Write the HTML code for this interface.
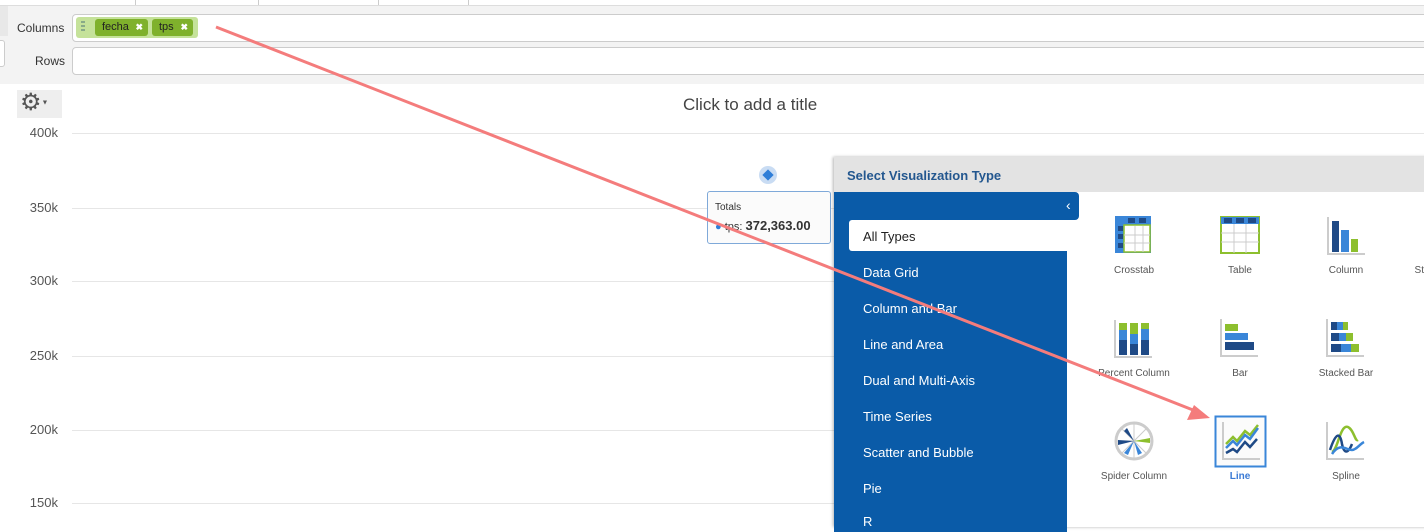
<!DOCTYPE html><html><head><style>
body{margin:0;width:1424px;height:522px;overflow:hidden;position:relative;background:#fff;font-family:"Liberation Sans",sans-serif;}
.a{position:absolute}
.lbl{font-size:12px;color:#333}
.grid{left:72px;right:0;height:1px;background:#e6e6e6}
.yl{left:28px;font-size:13px;color:#555;width:30px;text-align:right}
.side{font-size:13px;color:#fff;left:863px}
.ic{font-size:10px;color:#555;text-align:center;width:100px}
</style></head><body>
<div class="a" style="left:0;top:0;width:1424px;height:84px;background:#f3f3f3"></div>
<div class="a" style="left:0;top:0;width:1424px;height:5px;background:#fff;border-bottom:1px solid #ddd"></div>
<div class="a" style="left:135px;top:0;width:1px;height:5px;background:#ccc"></div>
<div class="a" style="left:258px;top:0;width:1px;height:5px;background:#ccc"></div>
<div class="a" style="left:378px;top:0;width:1px;height:5px;background:#ccc"></div>
<div class="a" style="left:468px;top:0;width:1px;height:5px;background:#ccc"></div>
<div class="a" style="left:0;top:6px;width:8px;height:30px;background:#e8e8e8"></div>
<div class="a" style="left:-4px;top:40px;width:7px;height:25px;border:1px solid #ccc;border-radius:3px;background:#fff"></div>
<div class="a lbl" style="left:17px;top:21px">Columns</div>
<div class="a lbl" style="left:35px;top:54px">Rows</div>
<div class="a" style="left:72px;top:14px;width:1360px;height:26px;border:1px solid #ccc;border-radius:4px;background:#fff"></div>
<div class="a" style="left:72px;top:47px;width:1360px;height:26px;border:1px solid #ccc;border-radius:4px;background:#fff"></div>
<div class="a" style="left:76px;top:17px;width:122px;height:21px;background:#c5e29a;border-radius:3px"></div>
<div class="a" style="left:81px;top:21px;width:4px;height:12px;background:repeating-linear-gradient(#8a8 0 2px,transparent 2px 4px)"></div>
<div class="a" style="left:95px;top:19px;width:53px;height:17px;background:#7fb12c;border-radius:3px;font-size:11px;color:#222;line-height:17px;padding-left:7px;box-sizing:border-box">fecha<span style="position:absolute;right:5px;color:#fff;font-weight:bold;font-size:9px">✖</span></div>
<div class="a" style="left:152px;top:19px;width:41px;height:17px;background:#7fb12c;border-radius:3px;font-size:11px;color:#222;line-height:17px;padding-left:7px;box-sizing:border-box">tps<span style="position:absolute;right:5px;color:#fff;font-weight:bold;font-size:9px">✖</span></div>
<div class="a" style="left:17px;top:90px;width:45px;height:28px;background:#eee;color:#555;font-size:24px;line-height:26px;padding-left:3px;box-sizing:border-box">⚙<span style="font-size:7px;vertical-align:middle">▼</span></div>
<div class="a" style="left:683px;top:95px;font-size:17px;color:#444">Click to add a title</div>
<div class="a grid" style="top:133px"></div><div class="a grid" style="top:208px"></div><div class="a grid" style="top:281px"></div><div class="a grid" style="top:356px"></div><div class="a grid" style="top:430px"></div><div class="a grid" style="top:503px"></div>
<div class="a yl" style="top:125px">400k</div><div class="a yl" style="top:200px">350k</div><div class="a yl" style="top:273px">300k</div><div class="a yl" style="top:348px">250k</div><div class="a yl" style="top:422px">200k</div><div class="a yl" style="top:495px">150k</div>
<div class="a" style="left:759px;top:166px;width:18px;height:18px;border-radius:50%;background:#c9dcf3"></div>
<div class="a" style="left:764px;top:171px;width:8px;height:8px;background:#2f7ed8;transform:rotate(45deg)"></div>
<div class="a" style="left:707px;top:191px;width:122px;height:51px;border:1px solid #7fa9d9;border-radius:3px;background:#fbfbfb"></div>
<div class="a" style="left:715px;top:202px;font-size:10px;color:#333">Totals</div>
<div class="a" style="left:715px;top:218px;font-size:11px;color:#333"><span style="color:#2f7ed8">●</span> tps: <b style="font-size:13px">372,363.00</b></div>
<div class="a" style="left:834px;top:157px;width:600px;height:370px;background:#fff;box-shadow:-1px 0 3px rgba(0,0,0,.3)"></div>
<div class="a" style="left:834px;top:157px;width:600px;height:35px;background:#e3e3e3"></div>
<div class="a" style="left:847px;top:168px;font-size:13px;font-weight:bold;color:#23578f">Select Visualization Type</div>
<div class="a" style="left:834px;top:192px;width:233px;height:340px;background:#0a5ba8"></div>
<div class="a" style="left:834px;top:192px;width:245px;height:28px;background:#0a5ba8;border-radius:0 4px 4px 0"></div>
<div class="a" style="left:1066px;top:197px;color:#fff;font-size:14px">‹</div>
<div class="a" style="left:849px;top:220px;width:226px;height:31px;background:#fff;border-radius:3px"></div>
<div class="a" style="left:863px;top:229px;font-size:13px;color:#222">All Types</div>
<div class="a side" style="top:265px">Data Grid</div><div class="a side" style="top:301px">Column and Bar</div><div class="a side" style="top:337px">Line and Area</div><div class="a side" style="top:373px">Dual and Multi-Axis</div><div class="a side" style="top:409px">Time Series</div><div class="a side" style="top:445px">Scatter and Bubble</div><div class="a side" style="top:481px">Pie</div><div class="a side" style="top:514px">R</div>
<div class="a ic" style="left:1084px;top:265px">Crosstab</div><div class="a ic" style="left:1190px;top:265px">Table</div><div class="a ic" style="left:1296px;top:265px">Column</div><div class="a ic" style="left:1365px;top:265px;text-align:right;width:59px">St</div>
<div class="a ic" style="left:1084px;top:368px">Percent Column</div><div class="a ic" style="left:1190px;top:368px">Bar</div><div class="a ic" style="left:1296px;top:368px">Stacked Bar</div>
<div class="a ic" style="left:1084px;top:471px">Spider Column</div><div class="a ic" style="left:1190px;top:471px;color:#3a7ad5;font-weight:bold">Line</div><div class="a ic" style="left:1296px;top:471px">Spline</div>
<svg class="a" style="left:0;top:0" width="1424" height="522">
<g transform="translate(1115,216)"><rect x="0" y="0" width="36" height="37" fill="#3a86d8"/><rect x="9" y="9" width="26" height="27" fill="#fff" stroke="#8dbf2e" stroke-width="1.5"/><rect x="3" y="10" width="5" height="5" fill="#1f4a86"/><rect x="3" y="18" width="5" height="5" fill="#1f4a86"/><rect x="3" y="27" width="5" height="5" fill="#1f4a86"/><rect x="13" y="2" width="7" height="5" fill="#1f4a86"/><rect x="24" y="2" width="7" height="5" fill="#1f4a86"/><path d="M20 10V36M28 10V36M9 19H35M9 27H35" stroke="#ccc"/></g>
<g transform="translate(1221,217)"><rect x="0" y="0" width="38" height="36" fill="#fff" stroke="#8dbf2e" stroke-width="2"/><rect x="0" y="0" width="38" height="7" fill="#3a86d8"/><rect x="3" y="1" width="8" height="5" fill="#1f4a86"/><rect x="15" y="1" width="8" height="5" fill="#1f4a86"/><rect x="27" y="1" width="8" height="5" fill="#1f4a86"/><path d="M13 7V36M25 7V36M0 16H38M0 25H38" stroke="#ccc"/></g>
<g transform="translate(1327,217)"><path d="M1 0V37H38" stroke="#ccc" stroke-width="2" fill="none"/><rect x="5" y="4" width="7" height="31" fill="#1f4a86"/><rect x="14" y="13" width="8" height="22" fill="#3a86d8"/><rect x="24" y="22" width="7" height="13" fill="#8dbf2e"/></g>
<g transform="translate(1114,320)"><path d="M1 0V37H38" stroke="#ccc" stroke-width="2" fill="none"/><rect x="5" y="3" width="8" height="7" fill="#8dbf2e"/><rect x="5" y="10" width="8" height="10" fill="#3a86d8"/><rect x="5" y="20" width="8" height="15" fill="#1f4a86"/><rect x="16" y="3" width="8" height="11" fill="#8dbf2e"/><rect x="16" y="14" width="8" height="10" fill="#3a86d8"/><rect x="16" y="24" width="8" height="11" fill="#1f4a86"/><rect x="27" y="3" width="8" height="6" fill="#8dbf2e"/><rect x="27" y="9" width="8" height="11" fill="#3a86d8"/><rect x="27" y="20" width="8" height="15" fill="#1f4a86"/></g>
<g transform="translate(1220,319)"><path d="M1 0V37H38" stroke="#ccc" stroke-width="2" fill="none"/><rect x="5" y="5" width="13" height="7" fill="#8dbf2e"/><rect x="5" y="14" width="23" height="7" fill="#3a86d8"/><rect x="5" y="23" width="29" height="8" fill="#1f4a86"/></g>
<g transform="translate(1326,319)"><path d="M1 0V37H38" stroke="#ccc" stroke-width="2" fill="none"/><rect x="5" y="3" width="6" height="8" fill="#1f4a86"/><rect x="11" y="3" width="6" height="8" fill="#3a86d8"/><rect x="17" y="3" width="5" height="8" fill="#8dbf2e"/><rect x="5" y="14" width="8" height="8" fill="#1f4a86"/><rect x="13" y="14" width="7" height="8" fill="#3a86d8"/><rect x="20" y="14" width="7" height="8" fill="#8dbf2e"/><rect x="5" y="25" width="10" height="8" fill="#1f4a86"/><rect x="15" y="25" width="10" height="8" fill="#3a86d8"/><rect x="25" y="25" width="8" height="8" fill="#8dbf2e"/></g>
<g transform="translate(1134,441)"><circle r="18" fill="none" stroke="#ccc" stroke-width="3"/><path d="M0-18V18M-18 0H18M-13-13L13 13M13-13L-13 13" stroke="#ccc"/><path d="M0 0L16-3L16 2Z" fill="#8dbf2e"/><path d="M0 0L-10-10L-7-13Z" fill="#1f4a86"/><path d="M0 0L-16-1L-16 4Z" fill="#1f4a86"/><path d="M0 0L8 12L4 14Z" fill="#3a86d8"/><path d="M0 0L-6 14L-10 12Z" fill="#3a86d8"/></g>
<rect x="1215.5" y="416.5" width="50" height="50" fill="#fbfbfb" stroke="#3a86d8" stroke-width="2"/>
<g transform="translate(1222,422)" fill="none" stroke-width="2.5"><path d="M1 0V37H38" stroke="#ccc" stroke-width="2"/><path d="M4 22L11 15L15 19L23 9L28 13L36 3" stroke="#8dbf2e"/><path d="M4 26L11 19L15 23L23 13L28 17L36 6" stroke="#3a86d8"/><path d="M4 31L11 27L15 30L23 20L28 25L35 17" stroke="#1f4a86"/></g>
<g transform="translate(1326,422)" fill="none" stroke-width="2.5"><path d="M1 0V37H38" stroke="#ccc" stroke-width="2"/><path d="M6 30C12 28 14 2 22 5C28 8 29 20 32 18" stroke="#8dbf2e"/><path d="M4 28C10 10 14 10 16 22C18 32 22 32 26 22" stroke="#1f4a86"/><path d="M6 32C14 20 20 28 26 28C30 28 34 22 38 20" stroke="#3a86d8"/></g>
<line x1="216" y1="27" x2="1193" y2="410" stroke="#f47c7c" stroke-width="3"/>
<path d="M1210 418L1187 420L1194 405Z" fill="#f47c7c"/>
</svg>
</body></html>
